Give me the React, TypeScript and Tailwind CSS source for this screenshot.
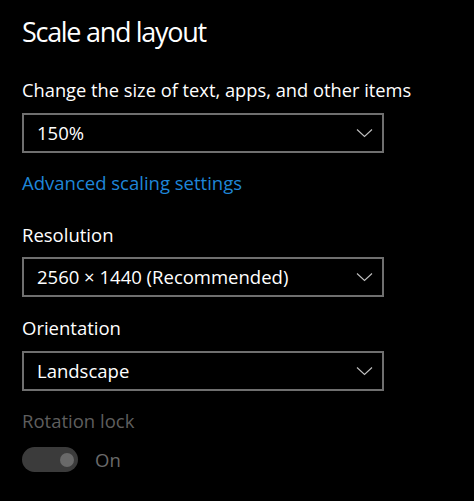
import React from 'react';

const font = { fontFamily: '"Open Sans", "Noto Sans", Arial, sans-serif' };

const Chevron: React.FC = () => (
  <svg width="17" height="10" viewBox="0 0 17 10" fill="none">
    <path d="M1 1.5 L8.5 8.5 L16 1.5" stroke="#c0c0c0" strokeWidth="1.1" />
  </svg>
);

const Dropdown: React.FC<{ value: string }> = ({ value }) => (
  <div className="flex items-center justify-between w-[362px] h-[40px] border-2 border-[#6f6f6f] pl-[13px] pr-[9px]">
    <span className="text-[18.5px] text-white leading-[24px]">{value}</span>
    <Chevron />
  </div>
);

export default function App() {
  return (
    <div className="w-[474px] h-[501px] bg-black pl-[22px] pt-[14px] overflow-hidden" style={font}>
      <h1 className="text-[27px] leading-[36px] tracking-[-1.3px] text-white font-normal">Scale and layout</h1>

      <div className="mt-[28px] text-[18.3px] leading-[24px] text-white">Change the size of text, apps, and other items</div>
      <div className="mt-[11px]">
        <Dropdown value="150%" />
      </div>

      <div className="mt-[18px] text-[18.5px] leading-[24px] text-[#1f86d8]">Advanced scaling settings</div>

      <div className="mt-[28px] text-[18.5px] leading-[24px] text-white">Resolution</div>
      <div className="mt-[10px]">
        <Dropdown value="2560 × 1440 (Recommended)" />
      </div>

      <div className="mt-[19px] text-[18.5px] leading-[24px] text-white">Orientation</div>
      <div className="mt-[11px]">
        <Dropdown value="Landscape" />
      </div>

      <div className="mt-[18px] text-[18.5px] leading-[24px] text-[#5e5e5e]">Rotation lock</div>
      <div className="mt-[14px] flex items-center gap-[17px]">
        <div className="w-[56px] h-[25px] rounded-full bg-[#3b3b3b] flex items-center justify-end pr-[4px]">
          <div className="w-[14px] h-[14px] rounded-full bg-[#696969]" />
        </div>
        <span className="text-[18.5px] leading-[24px] text-[#6a6a6a]">On</span>
      </div>
    </div>
  );
}
